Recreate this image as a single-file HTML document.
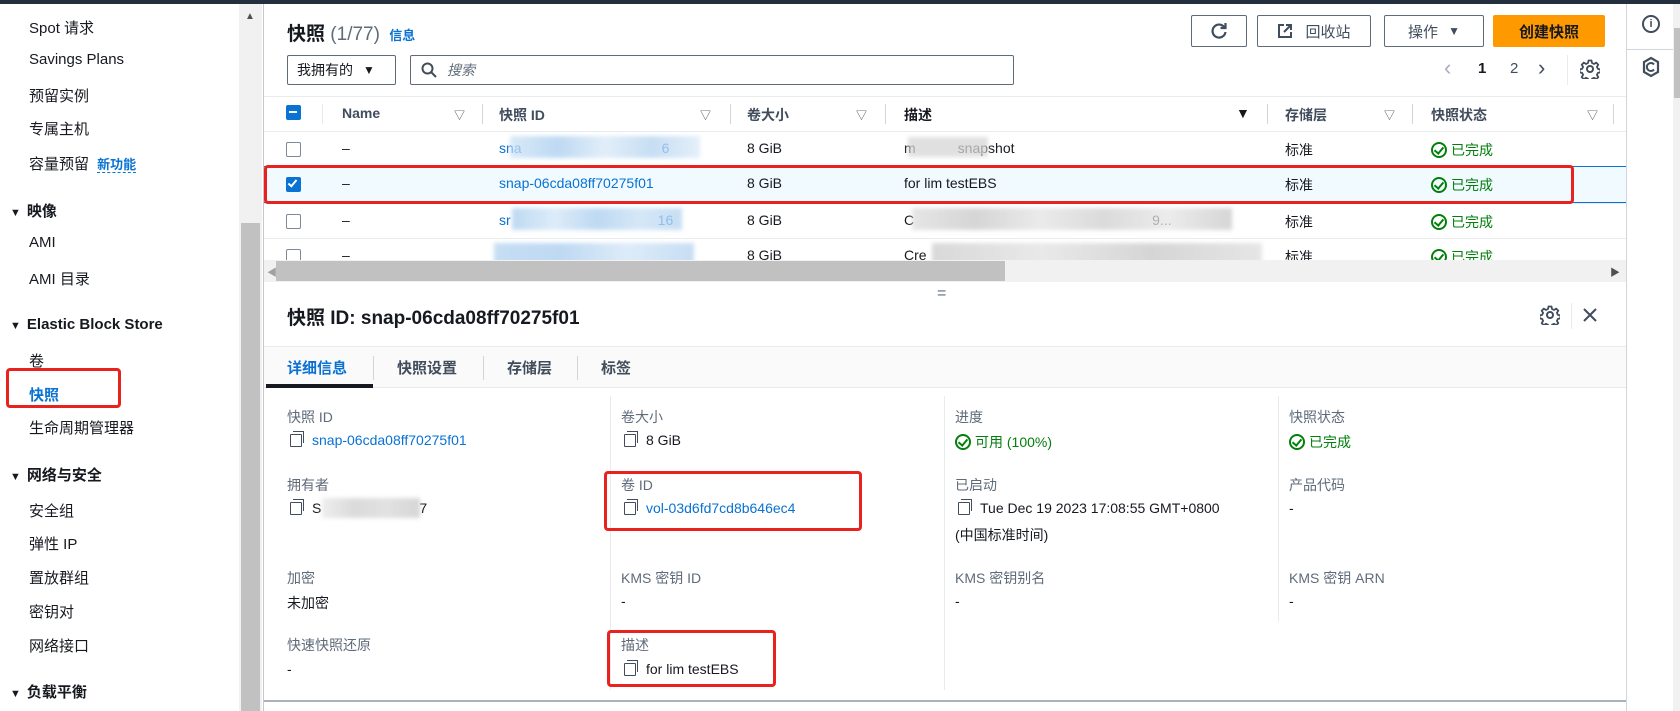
<!DOCTYPE html>
<html><head><meta charset="utf-8"><style>
*{box-sizing:border-box;margin:0;padding:0}
body{width:1680px;height:711px;overflow:hidden;position:relative;background:#fff;font-family:"Liberation Sans","Noto Sans CJK SC",sans-serif;color:#16191f;font-size:14px}
.a{position:absolute;white-space:nowrap}
.side{font-size:15px;color:#16191f}
.sh{font-size:15px;font-weight:bold;color:#16191f}
.lnk{color:#0972d3}
.g{color:#037f0c}
.lbl{color:#5f6b7a;font-size:14px}
.rb{position:absolute;border:3px solid #e8231f;border-radius:4px}
.btn{position:absolute;border:1px solid #5f6b7a;border-radius:2px;background:#fff;font-size:15px;display:flex;align-items:center;justify-content:center;color:#414d5c}
.vd{position:absolute;width:1px;background:#d1d5db}
.hl{position:absolute;height:1px;background:#e9ebed}
.cb{position:absolute;width:15px;height:15px;border:1.5px solid #7d8998;border-radius:2px;background:#fff}
.blur{position:absolute;filter:blur(2px);opacity:.75}
.ck{display:inline-block;width:16px;height:16px;border:2px solid #037f0c;border-radius:50%;vertical-align:-3px;margin-right:4px;position:relative}
.ck:after{content:"";position:absolute;left:3px;top:1px;width:4px;height:7px;border:solid #037f0c;border-width:0 2px 2px 0;transform:rotate(40deg)}
.cp{display:inline-block;width:12px;height:13px;border:1.5px solid #414d5c;border-radius:1px;position:relative;vertical-align:-2px;margin-right:10px;margin-left:3px}
.cp:before{content:"";position:absolute;left:2px;top:-4px;width:10px;height:11px;border-top:1.5px solid #414d5c;border-right:1.5px solid #414d5c}
.fl{position:absolute;font-size:11px;color:#414d5c}
</style></head><body>
<svg width="0" height="0" style="position:absolute"><defs>
<g id="gear"><circle cx="10" cy="10" r="3" fill="none" stroke="#414d5c" stroke-width="2"/><path d="M8.5 1.5h3l.5 2.5 2 1 2.2-1.4 2.1 2.1-1.4 2.2 1 2 2.5.5v3l-2.5.5-1 2 1.4 2.2-2.1 2.1-2.2-1.4-2 1-.5 2.5h-3l-.5-2.5-2-1-2.2 1.4-2.1-2.1 1.4-2.2-1-2-2.5-.5v-3l2.5-.5 1-2-1.4-2.2 2.1-2.1 2.2 1.4 2-1z" fill="none" stroke="#414d5c" stroke-width="1.8" stroke-linejoin="round"/></g>
</defs></svg>
<div class="a" style="left:0;top:0;width:1680px;height:4px;background:#232f3e"></div>

<!-- sidebar -->
<div class="a side" style="left:29px;top:17px">Spot 请求</div>
<div class="a side" style="left:29px;top:51px">Savings Plans</div>
<div class="a side" style="left:29px;top:85px">预留实例</div>
<div class="a side" style="left:29px;top:118px">专属主机</div>
<div class="a side" style="left:29px;top:153px">容量预留 <span style="color:#0972d3;font-size:13px;font-weight:bold;border-bottom:1px dashed #0972d3;margin-left:4px">新功能</span></div>
<div class="a sh" style="left:10px;top:200px"><span style="font-size:11px;margin-right:6px">▼</span>映像</div>
<div class="a side" style="left:29px;top:234px">AMI</div>
<div class="a side" style="left:29px;top:268px">AMI 目录</div>
<div class="a sh" style="left:10px;top:316px"><span style="font-size:11px;margin-right:6px">▼</span>Elastic Block Store</div>
<div class="a side" style="left:29px;top:350px">卷</div>
<div class="a side" style="left:29px;top:384px;color:#0972d3;font-weight:bold">快照</div>
<div class="a side" style="left:29px;top:417px">生命周期管理器</div>
<div class="a sh" style="left:10px;top:464px"><span style="font-size:11px;margin-right:6px">▼</span>网络与安全</div>
<div class="a side" style="left:29px;top:500px">安全组</div>
<div class="a side" style="left:29px;top:533px">弹性 IP</div>
<div class="a side" style="left:29px;top:567px">置放群组</div>
<div class="a side" style="left:29px;top:601px">密钥对</div>
<div class="a side" style="left:29px;top:635px">网络接口</div>
<div class="a sh" style="left:10px;top:681px"><span style="font-size:11px;margin-right:6px">▼</span>负载平衡</div>
<div class="rb" style="left:6px;top:368px;width:115px;height:40px"></div>
<div class="a" style="left:239px;top:4px;width:23px;height:707px;background:#f1f1f1"></div>
<div class="a" style="left:241px;top:223px;width:19px;height:488px;background:#c1c1c1"></div>
<div class="a" style="left:245px;top:11px;font-size:10px;color:#505050">▲</div>
<div class="a" style="left:263px;top:4px;width:1px;height:707px;background:#c6c6cd"></div>

<!-- header -->
<div class="a" style="left:287px;top:19px;font-size:19px"><b>快照</b> <span style="color:#5f6b7a">(1/77)</span> <span class="lnk" style="font-size:13px;font-weight:bold;margin-left:4px">信息</span></div>
<div class="btn" style="left:1191px;top:15px;width:56px;height:32px"><svg width="20" height="20" viewBox="0 0 20 20"><path d="M15.5 6.5A6.5 6.5 0 1 0 16.5 11" fill="none" stroke="#414d5c" stroke-width="2.2"/><path d="M16.5 2v5h-5" fill="none" stroke="#414d5c" stroke-width="2.2"/></svg></div>
<div class="btn" style="left:1257px;top:15px;width:114px;height:32px"><svg width="16" height="16" viewBox="0 0 16 16" style="margin-right:12px"><path d="M7 2H2v12h12V9M9 2h5v5M14 2L7 9" fill="none" stroke="#414d5c" stroke-width="2"/></svg>回收站</div>
<div class="btn" style="left:1384px;top:15px;width:100px;height:32px">操作 <span style="font-size:12px;margin-left:10px">▼</span></div>
<div class="btn" style="left:1493px;top:15px;width:112px;height:32px;background:#ff9900;border-color:#ff9900;color:#16191f;font-weight:bold">创建快照</div>

<div class="btn" style="left:287px;top:55px;width:109px;height:30px;justify-content:flex-start;padding-left:9px;color:#16191f;font-size:14px">我拥有的 <span style="font-size:12px;margin-left:10px">▼</span></div>
<div class="btn" style="left:410px;top:55px;width:604px;height:30px;justify-content:flex-start;padding-left:10px;color:#5f6b7a;font-size:14px"><svg width="16" height="16" viewBox="0 0 16 16" style="margin-right:10px"><circle cx="6.5" cy="6.5" r="5" fill="none" stroke="#414d5c" stroke-width="2"/><path d="M10 10l5 5" stroke="#414d5c" stroke-width="2"/></svg><i>搜索</i></div>
<div class="a" style="left:1444px;top:55px;font-size:22px;color:#aab">‹</div>
<div class="a" style="left:1478px;top:60px;font-size:15px;font-weight:bold">1</div>
<div class="a" style="left:1510px;top:60px;font-size:15px;color:#414d5c">2</div>
<div class="a" style="left:1538px;top:55px;font-size:22px;color:#414d5c">›</div>
<div class="vd" style="left:1567px;top:55px;height:30px;background:#e9ebed"></div>
<svg class="a" style="left:1580px;top:59px" width="20" height="20" viewBox="0 0 20 20"><use href="#gear"/></svg>

<!-- right panel -->
<div class="a" style="left:1626px;top:4px;width:1px;height:707px;background:#d1d5db"></div>
<div class="a" style="left:1627px;top:49px;width:46px;height:1px;background:#d1d5db"></div>
<div class="a" style="left:1642px;top:15px;width:18px;height:18px;border:2px solid #414d5c;border-radius:50%;text-align:center;font-size:11px;font-weight:bold;line-height:14px;color:#414d5c">i</div>
<svg class="a" style="left:1641px;top:56px" width="20" height="22" viewBox="0 0 20 22"><path d="M10 2l7 4v10l-7 4-7-4V6z" fill="none" stroke="#414d5c" stroke-width="2.2"/><path d="M13 8.5A4 4 0 1 0 13 13.5" fill="none" stroke="#414d5c" stroke-width="2"/></svg>
<div class="a" style="left:1673px;top:4px;width:7px;height:707px;background:#f1f1f1"></div>
<div class="a" style="left:1674px;top:28px;width:6px;height:70px;background:#c1c1c1"></div>

<!-- table -->
<div class="a" style="left:264px;top:96px;width:1362px;height:1px;background:#e9ebed"></div>
<div class="cb" style="left:286px;top:105px;background:#0972d3;border-color:#0972d3"><div style="position:absolute;left:2px;top:5px;width:8px;height:2px;background:#fff"></div></div>
<div class="a" style="left:342px;top:105px;font-weight:bold;color:#414d5c">Name</div>
<div class="a" style="left:499px;top:105px;font-weight:bold;color:#414d5c">快照 ID</div>
<div class="a" style="left:747px;top:105px;font-weight:bold;color:#414d5c">卷大小</div>
<div class="a" style="left:904px;top:105px;font-weight:bold;color:#16191f">描述</div>
<div class="a" style="left:1285px;top:105px;font-weight:bold;color:#414d5c">存储层</div>
<div class="a" style="left:1431px;top:105px;font-weight:bold;color:#414d5c">快照状态</div>
<div class="fl" style="left:454px;top:107px">▽</div>
<div class="fl" style="left:700px;top:107px">▽</div>
<div class="fl" style="left:856px;top:107px">▽</div>
<div class="fl" style="left:1236px;top:105px;color:#16191f;font-size:14px">▼</div>
<div class="fl" style="left:1384px;top:107px">▽</div>
<div class="fl" style="left:1587px;top:107px">▽</div>
<div class="vd" style="left:322px;top:104px;height:20px;background:#e9ebed"></div>
<div class="vd" style="left:482px;top:104px;height:20px"></div>
<div class="vd" style="left:730px;top:104px;height:20px"></div>
<div class="vd" style="left:885px;top:104px;height:20px"></div>
<div class="vd" style="left:1267px;top:104px;height:20px"></div>
<div class="vd" style="left:1412px;top:104px;height:20px"></div>
<div class="vd" style="left:1613px;top:104px;height:20px"></div>
<div class="hl" style="left:264px;top:131px;width:1362px"></div>
<div class="a" style="left:264px;top:166px;width:1362px;height:37px;background:#f1faff;border-top:1px solid #0972d3;border-bottom:1px solid #0972d3"></div>
<div class="hl" style="left:264px;top:238px;width:1362px"></div>

<div class="cb" style="left:286px;top:142px"></div>
<div class="a" style="left:342px;top:140px">–</div>
<div class="a lnk" style="left:499px;top:140px">sna<span style="opacity:0">xxxxxxxxxxxxxxxxxxxx</span>6</div>
<div class="blur" style="left:510px;top:136px;width:190px;height:22px;background:linear-gradient(90deg,#cde3f5,#a9cdef,#d8e9f7,#b4d3f0,#dcebf8)"></div>
<div class="a" style="left:747px;top:140px">8 GiB</div>
<div class="a" style="left:904px;top:140px">m<span style="opacity:0">xxxxxx</span>snapshot</div>
<div class="blur" style="left:908px;top:137px;width:80px;height:20px;background:#d6d6d6"></div>
<div class="a" style="left:1285px;top:140px">标准</div>
<div class="a g" style="left:1431px;top:140px"><span class="ck"></span>已完成</div>

<div class="cb" style="left:286px;top:177px;background:#0972d3;border-color:#0972d3"><div style="position:absolute;left:3px;top:0px;width:5px;height:9px;border:solid #fff;border-width:0 2px 2px 0;transform:rotate(40deg)"></div></div>
<div class="a" style="left:342px;top:175px">–</div>
<div class="a lnk" style="left:499px;top:175px">snap-06cda08ff70275f01</div>
<div class="a" style="left:747px;top:175px">8 GiB</div>
<div class="a" style="left:904px;top:175px">for lim testEBS</div>
<div class="a" style="left:1285px;top:175px">标准</div>
<div class="a g" style="left:1431px;top:175px"><span class="ck"></span>已完成</div>

<div class="hl" style="left:264px;top:203px;width:1362px"></div>
<div class="cb" style="left:286px;top:214px"></div>
<div class="a" style="left:342px;top:212px">–</div>
<div class="a lnk" style="left:499px;top:212px">sr<span style="opacity:0">xxxxxxxxxxxxxxxxxxxxx</span>16</div>
<div class="blur" style="left:512px;top:208px;width:170px;height:22px;background:linear-gradient(90deg,#a9cdef,#d2e6f7,#a9cdef,#c8e0f5,#b4d3f0)"></div>
<div class="a" style="left:747px;top:212px">8 GiB</div>
<div class="a" style="left:904px;top:212px">C<span style="opacity:0">xxxxxxxxxxxxxxxxxxxxxxxxxxxxxxxxxx</span>9...</div>
<div class="blur" style="left:912px;top:208px;width:320px;height:22px;background:linear-gradient(90deg,#ddd,#c8c8c8,#e4e4e4,#cfcfcf,#e6e6e6,#c8c8c8)"></div>
<div class="a" style="left:1285px;top:212px">标准</div>
<div class="a g" style="left:1431px;top:212px"><span class="ck"></span>已完成</div>
<div class="a" style="left:264px;top:239px;width:1362px;height:21px;overflow:hidden">
<div class="cb" style="left:22px;top:10px"></div>
<div class="a" style="left:78px;top:8px">–</div>
<div class="blur" style="left:230px;top:4px;width:200px;height:22px;background:linear-gradient(90deg,#b4d3f0,#a9cdef,#d2e6f7,#b4d3f0)"></div>
<div class="a" style="left:483px;top:8px">8 GiB</div>
<div class="a" style="left:640px;top:8px">Cre</div>
<div class="blur" style="left:668px;top:4px;width:330px;height:22px;background:linear-gradient(90deg,#ccc,#e2e2e2,#c8c8c8,#dedede)"></div>
<div class="a" style="left:1021px;top:8px">标准</div>
<div class="a g" style="left:1167px;top:8px"><span class="ck"></span>已完成</div>
</div>
<div class="a" style="left:264px;top:260px;width:1362px;height:22px;background:#f1f1f1"></div>
<div class="a" style="left:276px;top:261px;width:729px;height:20px;background:#c1c1c1"></div>
<div class="a" style="left:267px;top:264px;font-size:10px;color:#a0a0a0">◀</div>
<div class="a" style="left:1610px;top:264px;font-size:10px;color:#505050">▶</div>
<div class="rb" style="left:264px;top:165px;width:1310px;height:39px"></div>
<div class="a" style="left:937px;top:285px;font-size:16px;color:#5f6b7a">=</div>

<!-- detail -->
<div class="a" style="left:287px;top:303px;font-size:19px;font-weight:bold">快照 ID: snap-06cda08ff70275f01</div>
<svg class="a" style="left:1540px;top:305px" width="20" height="20" viewBox="0 0 20 20"><use href="#gear"/></svg>
<div class="vd" style="left:1571px;top:303px;height:26px;background:#e9ebed"></div>
<svg class="a" style="left:1582px;top:307px" width="16" height="16" viewBox="0 0 16 16"><path d="M2 2l12 12M14 2L2 14" stroke="#414d5c" stroke-width="2"/></svg>
<div class="a" style="left:264px;top:346px;width:1362px;height:42px;background:#fafafa;border-top:1px solid #e9ebed;border-bottom:1px solid #e9ebed"></div>
<div class="a lnk" style="left:287px;top:357px;font-size:15px;font-weight:bold">详细信息</div>
<div class="a" style="left:266px;top:384px;width:107px;height:4px;background:#16191f"></div>
<div class="vd" style="left:373px;top:356px;height:24px"></div>
<div class="a" style="left:397px;top:357px;font-size:15px;color:#414d5c;font-weight:bold">快照设置</div>
<div class="vd" style="left:483px;top:356px;height:24px"></div>
<div class="a" style="left:507px;top:357px;font-size:15px;color:#414d5c;font-weight:bold">存储层</div>
<div class="vd" style="left:577px;top:356px;height:24px"></div>
<div class="a" style="left:601px;top:357px;font-size:15px;color:#414d5c;font-weight:bold">标签</div>

<div class="vd" style="left:610px;top:396px;height:294px;background:#e9ebed"></div>
<div class="vd" style="left:944px;top:396px;height:294px;background:#e9ebed"></div>
<div class="vd" style="left:1278px;top:396px;height:226px;background:#e9ebed"></div>

<div class="a lbl" style="left:287px;top:407px">快照 ID</div>
<div class="a lnk" style="left:287px;top:432px"><span class="cp"></span>snap-06cda08ff70275f01</div>
<div class="a lbl" style="left:287px;top:475px">拥有者</div>
<div class="a" style="left:287px;top:500px"><span class="cp"></span>S<span style="opacity:0">xxxxxxxxxxxxxx</span>7</div>
<div class="blur" style="left:322px;top:498px;width:98px;height:20px;background:linear-gradient(90deg,#e8e8e8,#cfcfcf,#d8d8d8,#c8c8c8)"></div>
<div class="a lbl" style="left:287px;top:568px">加密</div>
<div class="a" style="left:287px;top:593px">未加密</div>
<div class="a lbl" style="left:287px;top:635px">快速快照还原</div>
<div class="a" style="left:287px;top:661px">-</div>

<div class="a lbl" style="left:621px;top:407px">卷大小</div>
<div class="a" style="left:621px;top:432px"><span class="cp"></span>8 GiB</div>
<div class="a lbl" style="left:621px;top:475px">卷 ID</div>
<div class="a lnk" style="left:621px;top:500px"><span class="cp"></span>vol-03d6fd7cd8b646ec4</div>
<div class="a lbl" style="left:621px;top:568px">KMS 密钥 ID</div>
<div class="a" style="left:621px;top:593px">-</div>
<div class="a lbl" style="left:621px;top:635px">描述</div>
<div class="a" style="left:621px;top:661px"><span class="cp"></span>for lim testEBS</div>

<div class="a lbl" style="left:955px;top:407px">进度</div>
<div class="a g" style="left:955px;top:432px"><span class="ck"></span>可用 (100%)</div>
<div class="a lbl" style="left:955px;top:475px">已启动</div>
<div class="a" style="left:955px;top:500px"><span class="cp"></span>Tue Dec 19 2023 17:08:55 GMT+0800</div>
<div class="a" style="left:955px;top:525px">(中国标准时间)</div>
<div class="a lbl" style="left:955px;top:568px">KMS 密钥别名</div>
<div class="a" style="left:955px;top:593px">-</div>

<div class="a lbl" style="left:1289px;top:407px">快照状态</div>
<div class="a g" style="left:1289px;top:432px"><span class="ck"></span>已完成</div>
<div class="a lbl" style="left:1289px;top:475px">产品代码</div>
<div class="a" style="left:1289px;top:500px">-</div>
<div class="a lbl" style="left:1289px;top:568px">KMS 密钥 ARN</div>
<div class="a" style="left:1289px;top:593px">-</div>

<div class="rb" style="left:604px;top:471px;width:258px;height:60px"></div>
<div class="rb" style="left:607px;top:630px;width:169px;height:57px"></div>
<div class="a" style="left:264px;top:700px;width:1362px;height:2px;background:#aab1ba"></div>
</body></html>
